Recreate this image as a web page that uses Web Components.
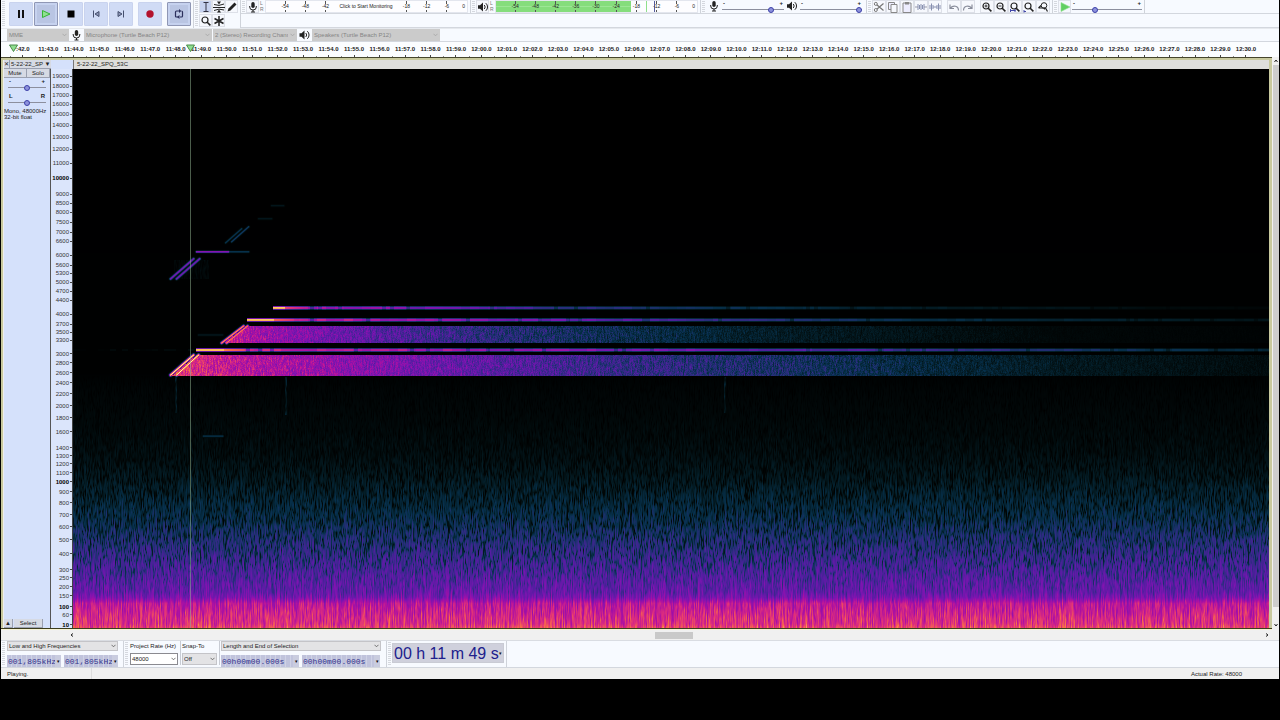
<!DOCTYPE html>
<html lang="en">
<head>
<meta charset="utf-8">
<title>5-22-22_SPQ_53C</title>
<style>
  body {
    margin: 0;
    background: #000;
    font-family: "Liberation Sans", Arial, sans-serif;
    font-size: 6px;
    color: #222;
  }
</style>
</head>
<body>

<template id="app-window-template">
  <style>
    :host {
      display: flex;
      flex-direction: column;
      height: calc(100vh - 41px);
      margin: 0 1px;
      background: #f7faff;
    }
    .top {
      display: grid;
      grid-template-columns: auto auto 1fr;
      grid-template-rows: 14px 14px;
    }
    .tall { grid-row: span 2; }
    .strip {
      display: flex;
      border-bottom: 1px solid #d3d7de;
      box-sizing: border-box;
    }
    .row { display: flex; border-bottom: 1px solid #d3d7de; border-top: 1px solid #e6e9ee; height: 12px; }
    .devices { padding-left: 6px; gap: 1px; }
    .mme { width: 62px; }
    .mic { width: 128px; }
    .channels { width: 84px; }
    .speakers { width: 128px; }
    .devices ui-icon { width: 13px; height: 12px; }
    .set { display: flex; }
    .edit { gap: 5px; --cell: 14px; }
    .transport { display: flex; gap: 1px; padding: 2px 0 0 3px; }
    .apart { margin-left: 4px; }
    .tools { display: grid; grid-template-columns: repeat(3, 13px); grid-auto-rows: 14px; }
    .volumes { display: flex; gap: 2px; padding: 0 2px; }
    .mixer { width: 62px; }
    .speed { width: 70px; margin-left: 1px; }
    track-area { flex: 1; min-height: 0; }
    .bottom { display: flex; height: 28px; border-top: 1px solid #d9dce2; border-bottom: 1px solid #d3d7de; box-sizing: border-box; }
    .stack { display: flex; flex-direction: column; gap: 4px; padding: 0 3px 0 1px; }
    .stack > div { display: flex; gap: 3px; }
    .stack ui-select { height: 10px; }
    .freq { width: 111px; }
    .length { width: 160px; }
    .field { display: flex; flex-direction: column; gap: 3px; padding: 2px 2px 0 1px; }
    .field span { line-height: 7px; white-space: nowrap; }
    .field ui-select { height: 12px; }
    .rate { width: 48px; }
    .snap { width: 35px; border-left: 1px solid #c8ccd4; border-right: 1px solid #c8ccd4; }
    .status { display: flex; height: 11px; background: #f0f0f0; line-height: 12px; }
    .status span:first-child { width: 84px; padding-left: 6px; border-right: 1px solid #ddd; }
    .status span:last-child { margin-left: auto; padding-right: 37px; }
  </style>
  <div class="top">
    <tool-bar class="tall">
      <div class="transport">
        <push-button icon="pause" label="Pause"></push-button>
        <push-button icon="play" label="Play" pressed></push-button>
        <push-button icon="stop" label="Stop"></push-button>
        <push-button icon="start" label="Skip to Start"></push-button>
        <push-button icon="end" label="Skip to End"></push-button>
        <push-button icon="record" label="Record" class="apart"></push-button>
        <push-button icon="loop" label="Loop" class="apart" pressed></push-button>
      </div>
    </tool-bar>
    <tool-bar class="tall">
      <div class="tools">
        <push-button small pressed icon="ibeam" label="Selection Tool"></push-button>
        <push-button small icon="envelope" label="Envelope Tool"></push-button>
        <push-button small icon="pencil" label="Draw Tool"></push-button>
        <push-button small icon="zoom" label="Zoom Tool"></push-button>
        <push-button small icon="multi" label="Multi-Tool"></push-button>
      </div>
    </tool-bar>
    <div class="strip">
      <tool-bar>
        <push-button small icon="mic" label="Recording Meter"></push-button>
        <level-meter ticks="-54 -48 -42"><button slot="prompt">Click to Start Monitoring</button></level-meter>
      </tool-bar>
      <tool-bar>
        <push-button small icon="speaker" label="Playback Meter"></push-button>
        <level-meter live ticks="-54 -48 -42 -36 -30 -24"></level-meter>
      </tool-bar>
      <tool-bar>
        <div class="volumes">
          <ui-icon name="mic"></ui-icon>
          <ui-slider class="mixer" value="82" label="Recording Volume"></ui-slider>
          <ui-icon name="speaker"></ui-icon>
          <ui-slider class="mixer" value="100" label="Playback Volume"></ui-slider>
        </div>
      </tool-bar>
      <tool-bar>
        <div class="set edit">
          <div class="set">
            <push-button small icon="cut" label="Cut"></push-button>
            <push-button small icon="copy" label="Copy"></push-button>
            <push-button small icon="paste" label="Paste"></push-button>
            <push-button small icon="trim" label="Trim"></push-button>
            <push-button small icon="silence" label="Silence"></push-button>
          </div>
          <div class="set">
            <push-button small icon="undo" label="Undo"></push-button>
            <push-button small icon="redo" label="Redo"></push-button>
          </div>
          <div class="set">
            <push-button small icon="zoomin" label="Zoom In"></push-button>
            <push-button small icon="zoomout" label="Zoom Out"></push-button>
            <push-button small icon="fitsel" label="Fit Selection"></push-button>
            <push-button small icon="fitproj" label="Fit Project"></push-button>
            <push-button small icon="zoomtoggle" label="Zoom Toggle"></push-button>
          </div>
        </div>
      </tool-bar>
      <tool-bar>
        <push-button small icon="go" label="Play at Speed"></push-button>
        <ui-slider class="speed" value="32" label="Playback Speed"></ui-slider>
      </tool-bar>
    </div>
    <div class="strip"></div>
  </div>
  <div class="row devices">
    <ui-select class="mme" disabled label="Audio Host" value="MME"></ui-select>
    <ui-icon name="mic"></ui-icon>
    <ui-select class="mic" disabled label="Recording Device" value="Microphone (Turtle Beach P12)"></ui-select>
    <ui-select class="channels" disabled label="Recording Channels" value="2 (Stereo) Recording Chann"></ui-select>
    <ui-icon name="speaker"></ui-icon>
    <ui-select class="speakers" disabled label="Playback Device" value="Speakers (Turtle Beach P12)"></ui-select>
  </div>
  <time-ruler></time-ruler>
  <track-area></track-area>
  <div class="bottom">
    <tool-bar>
      <div class="stack">
        <ui-select class="freq" label="Spectral Selection" value="Low and High Frequencies"></ui-select>
        <div>
          <digit-field value="001,805kHz" label="Low Frequency"></digit-field>
          <digit-field value="001,805kHz" label="High Frequency"></digit-field>
        </div>
      </div>
    </tool-bar>
    <tool-bar>
      <div class="field rate"><span>Project Rate (Hz)</span><ui-select light label="Project Rate (Hz)" value="48000"></ui-select></div>
      <div class="field snap"><span>Snap-To</span><ui-select label="Snap-To" value="Off"></ui-select></div>
      <div class="stack">
        <ui-select class="length" label="Selection Mode" value="Length and End of Selection"></ui-select>
        <div>
          <digit-field value="00h00m00.000s" label="Selection Length"></digit-field>
          <digit-field value="00h00m00.000s" label="Selection End"></digit-field>
        </div>
      </div>
    </tool-bar>
    <tool-bar>
      <big-time>00 h 11 m 49 s</big-time>
    </tool-bar>
  </div>
  <div class="status"><span>Playing.</span><span>Actual Rate: 48000</span></div>
</template>

<template id="tool-bar-template">
  <style>
    :host {
      display: flex;
      align-items: flex-start;
      border-right: 1px solid #cfd3da;
      padding-right: 2px;
    }
    i {
      align-self: stretch;
      width: 3px;
      margin: 1px;
      background: repeating-linear-gradient(#d5d8de 0 1px, transparent 1px 2px);
    }
  </style>
  <i></i><slot></slot>
</template>

<template id="push-button-template">
  <style>
    :host { display: block; }
    button {
      display: flex;
      align-items: center;
      justify-content: center;
      width: 24px;
      height: 24px;
      padding: 0;
      border: 1px solid #c9d3ee;
      border-radius: 1px;
      background: #d0dbf5;
    }
    :host([pressed]) button { background: #b9c5e3; border: 1px solid #8f97b5; box-shadow: inset 0 0 0 2px #c6d2ef; }
    :host([small]) button { width: var(--cell, 13px); height: 13px; background: #f6f8fd; border: 1px solid #dde0e8; border-radius: 0; }
    :host([small][pressed]) button { background: #c6d2ef; box-shadow: none; }
    ui-icon { flex: none; width: 12px; height: 12px; }
  </style>
  <button type="button"><ui-icon></ui-icon></button>
</template>

<template id="ui-select-template">
  <style>
    :host { display: grid; }
    select, svg { grid-area: 1 / 1; }
    select {
      appearance: none;
      box-sizing: border-box;
      width: 100%;
      height: 100%;
      min-width: 0;
      padding: 0 8px 0 1px;
      border: 1px solid #c4c4c8;
      border-radius: 0;
      background: #e3e3e5;
      color: #1c1c1c;
      font: inherit;
      opacity: 1;
    }
    :host([light]) select { background: #fff; border-color: #8a8a90; }
    :host([disabled]) select { background: #cbcbcb; border-color: #cbcbcb; color: #858585; }
    svg { justify-self: end; align-self: center; width: 5px; height: 4px; margin-right: 2px; fill: none; stroke: #555; pointer-events: none; }
    :host([disabled]) svg { stroke: #a5a5a5; }
  </style>
  <select><option></option></select>
  <svg viewBox="0 0 5 4"><path d="M.5 .8 2.5 2.8 4.5 .8" stroke-width=".8"/></svg>
</template>

<template id="ui-slider-template">
  <style>
    :host { display: grid; grid-template-columns: 1fr 1fr; height: 13px; }
    span { line-height: 7px; font-size: 6px; font-weight: bold; grid-row: 1; height: 6px; padding: 0 1px; }
    span + span { text-align: right; }
    input {
      appearance: none;
      grid-column: 1 / 3;
      width: 100%;
      height: 6px;
      margin: 0;
      background: linear-gradient(#8c8f9e, #8c8f9e) center / 100% 1px no-repeat;
    }
    input::-webkit-slider-thumb {
      appearance: none;
      box-sizing: border-box;
      width: 6px;
      height: 6px;
      border: 1px solid #3c40a8;
      border-radius: 50%;
      background: #8d92dc;
    }
  </style>
  <span></span><span></span>
  <input type="range">
</template>

<template id="level-meter-template">
  <style>
    :host { display: flex; width: 209px; height: 13px; font-size: 5px; }
    .lr { width: 5px; padding-left: 1px; font-size: 5px; line-height: 6px; color: #777; }
    .scale {
      flex: 1;
      display: flex;
      align-items: center;
      padding-left: 9px;
      border: 1px solid #e3e6ee;
      box-sizing: border-box;
      background: #fdfdff;
    }
    :host([live]) .scale {
      background:
        linear-gradient(#555c9c, #555c9c) 79% 0 / 1px 100% no-repeat,
        linear-gradient(#8fe08c, #8fe08c) 75% 0 / 1px 100% no-repeat,
        linear-gradient(#9ce695, #9ce695) 0 50% / 67% 1px no-repeat,
        linear-gradient(90deg, #85dd7c 0 67%, #fdfdff 67%);
    }
    .scale > span {
      flex: 1 0 0;
      text-align: center;
      line-height: 11px;
      background: linear-gradient(#555, #555) center top / 1px 3px no-repeat,
        linear-gradient(#555, #555) center bottom / 1px 2px no-repeat;
    }
    .prompt { flex: 3 0 0; min-width: 0; display: flex; justify-content: center; }
    ::slotted(button) { padding: 0; border: 0; background: none; color: #222; font: inherit; white-space: nowrap; line-height: 11px; }
    .scale > .zero { text-align: right; background: none; flex: 0 0 10px; padding-right: 2px; box-sizing: border-box; }
  </style>
  <div class="lr">L<br>R</div>
  <div class="scale"></div>
</template>

<template id="digit-field-template">
  <style>
    :host { display: flex; height: 12px; background: #c9ccdf; color: #34348c; }
    input {
      width: 48px;
      box-sizing: border-box;
      padding: 0 0 0 1px;
      border: 0;
      background: repeating-linear-gradient(90deg, #c0c3dc 0 4px, #cfd2e6 4px 5px);
      color: inherit;
      font: 8px "Liberation Mono", monospace;
    }
    :host([wide]) input { width: 72px; }
    button { width: 6px; padding: 0; border: 0; background: #c9ccdf; color: #111; font-size: 5px; line-height: 11px; }
  </style>
  <input type="text"><button type="button" aria-label="Format">▾</button>
</template>

<template id="big-time-template">
  <style>
    :host { display: flex; margin: 2px 0 0; border: 1px solid #c9cbd4; background: #cfd0dc; color: #20208c; height: 18px; }
    output {
      font-size: 16px;
      line-height: 20px;
      padding-left: 1px;
      white-space: nowrap;
    }
    button { width: 4px; padding: 0; border: 0; background: none; color: #111; font-size: 5px; }
  </style>
  <output><slot></slot></output><button type="button" aria-label="Format">▾</button>
</template>

<template id="time-ruler-template">
  <style>
    :host { display: flex; position: relative; height: 15px; padding: 0 20px 0 9px; background: #fbfdff; overflow: hidden; }
    span {
      flex: 1 0 0;
      min-width: 0;
      display: flex;
      justify-content: center;
      font-weight: bold;
      line-height: 15px;
      background: linear-gradient(#444, #444) center bottom / 1px 2px no-repeat,
        linear-gradient(#888, #888) left bottom / 1px 1px no-repeat;
    }
    span:first-child { justify-content: flex-end; }
    svg { position: absolute; top: 2px; width: 9px; height: 8px; }
    .pin { left: 8px; }
    .head { left: 185px; }
  </style>
</template>

<template id="track-area-template">
  <style>
    :host {
      display: grid;
      grid-template-columns: 1fr 7px;
      grid-template-rows: 1fr 11px;
      background: #f0f0f0;
    }
    .track {
      display: grid;
      grid-template-columns: 48px 22px 1fr;
      grid-template-rows: 9px 1fr;
      min-height: 0;
      border-top: 1px solid #45452c;
      border-bottom: 1px solid #3c3c1c;
      padding: 2px 3px 0 2px;
      background: #c8c99e;
    }
    .panel {
      grid-row: 1 / 3;
      display: flex;
      flex-direction: column;
      background: #d5e1fb;
      border-right: 1px solid #555;
      border-left: 1px solid #eee;
      box-sizing: border-box;
      min-height: 0;
    }
    .name, .pair, .foot { display: flex; }
    button { padding: 0; border: 0; border-right: 1px solid #9aa0b0; border-bottom: 1px solid #9aa0b0; background: #d6dae4; color: #222; font: inherit; line-height: 8px; height: 9px; }
    .name button:first-child { width: 9px; }
    .name button:last-child { flex: 1; white-space: nowrap; text-align: left; padding-left: 1px; }
    .pair button { flex: 1; }
    .panel ui-slider { margin: 0 4px 2px; height: 13px; }
    .panel p { margin: 0; line-height: 6px; }
    .foot { margin-top: auto; gap: 1px; }
    .foot button:first-child { width: 9px; }
    .foot button:last-child { width: 29px; }
    .corner { background: #d5e1fb; }
    .clip { background: #dededc; line-height: 9px; padding-left: 3px; overflow: hidden; border-left: 1px solid #777; }
    freq-ruler { min-height: 0; }
    spectro-view { min-height: 0; min-width: 0; }
    .vbar, .hbar { display: flex; justify-content: space-between; align-items: center; }
    .vbar { flex-direction: column; padding: 2px 0; }
    .vbar i { flex: 1; width: 6px; margin: 2px 0 16px; background: #cdcdcd; }
    .hbar { padding: 0 3px 0 69px; border-top: 1px solid #f7f4d4; }
    .hbar i { width: 38px; height: 7px; margin-left: 8px; background: #c9c9c9; }
    svg { width: 4px; height: 4px; fill: none; stroke: #222; }
  </style>
  <div class="track">
    <div class="panel">
      <div class="name"><button type="button" aria-label="Close">✕</button><button type="button">5-22-22_SP ▼</button></div>
      <div class="pair"><button type="button">Mute</button><button type="button">Solo</button></div>
      <ui-slider value="50" label="Gain"></ui-slider>
      <ui-slider value="50" low="L" high="R" label="Pan"></ui-slider>
      <p>Mono, 48000Hz<br>32-bit float</p>
      <div class="foot"><button type="button" aria-label="Collapse">▲</button><button type="button">Select</button></div>
    </div>
    <div class="corner"></div>
    <div class="clip">5-22-22_SPQ_53C</div>
    <freq-ruler></freq-ruler>
    <spectro-view></spectro-view>
  </div>
  <div class="vbar">
    <svg viewBox="0 0 4 4"><path d="M.5 3 2 1 3.5 3"/></svg><i></i>
    <svg viewBox="0 0 4 4"><path d="M.5 1 2 3 3.5 1"/></svg>
  </div>
  <div class="hbar">
    <svg viewBox="0 0 4 4"><path d="M3 .5 1 2 3 3.5"/></svg><i></i>
    <svg viewBox="0 0 4 4"><path d="M1 .5 3 2 1 3.5"/></svg>
  </div>
</template>

<template id="freq-ruler-template">
  <style>
    :host { display: flex; flex-direction: column; background: #dbe5fb; border-right: 1px solid #444; box-sizing: border-box; }
    div { flex-basis: 0; min-height: 0; display: flex; align-items: flex-end; justify-content: flex-end; }
    span { display: flex; align-items: center; height: 8px; margin-bottom: -4px; line-height: 8px; color: #333; }
    span::after { content: ""; width: 2px; height: 1px; margin-left: 1px; background: #444; }
    .major { font-weight: bold; color: #000; }
  </style>
</template>

<template id="spectro-view-template">
  <style>
    :host { display: block; background: #000; }
    canvas { display: block; width: 100%; height: 100%; }
  </style>
  <canvas role="img" aria-label="Spectrogram"></canvas>
</template>

<app-window></app-window>

<script>
const stamp = (host, id) => {
  const root = host.attachShadow({mode: 'open'});
  root.appendChild(document.getElementById(id + '-template').content.cloneNode(true));
  return root;
};

const glass = '<circle cx="5" cy="5" r="3" fill="none" stroke="#222" stroke-width="1.2"/><path d="M7.2 7.2 10.4 10.4" stroke="#222" stroke-width="1.6"/>';
const icons = {
  pause: '<path d="M3 2h2v8H3zM7 2h2v8H7z" fill="#111"/>',
  play: '<path d="M2.5 2.5 10 6 2.5 9.5z" fill="#8fe08f" stroke="#35b535"/>',
  stop: '<path d="M2.5 2.5h7v7h-7z" fill="#000"/>',
  start: '<path d="M3.5 2.5v7M9 3.5 5 6 9 8.5z" fill="#8a94b4" stroke="#46506e"/>',
  end: '<path d="M8.5 2.5v7M3 3.5 7 6 3 8.5z" fill="#8a94b4" stroke="#46506e"/>',
  record: '<circle cx="6" cy="6" r="3.7" fill="#b3122c"/>',
  loop: '<path d="M5 9H3.500Q2.500 9 2.500 8V4Q2.500 3 3.500 3H7M7 9H8.500Q9.500 9 9.500 8V4Q9.500 3 8.500 3" fill="none" stroke="#2b2f5c" stroke-width="1.200"/><path d="M6 1 8.300 3 6 5zM6.500 7 4 9l2.500 2z" fill="#2b2f5c"/>',
  ibeam: '<path d="M3.5 1.5h5M3.5 10.5h5M6 1.5v9" stroke="#334" fill="none"/>',
  envelope: '<path d="M0 6.500h12M1 9.500q5-2.500 10-.5M1 3.500q5 2 10-.5" stroke="#222" fill="none"/><path d="M4 .5h4L6 3.5zM4 11.5h4L6 8.5z" fill="#222"/>',
  pencil: '<path d="M1.5 10.5 2.5 7.5 8.5 1.5 10.5 3.5 4.5 9.5z" fill="#222"/>',
  zoom: glass,
  multi: '<path d="M6 1v10M1.5 3.5l9 5M1.5 8.5l9-5" stroke="#222" stroke-width="1.5"/>',
  mic: '<rect x="4.3" y="1" width="3.4" height="6" rx="1.7" fill="#222"/><path d="M2.7 5v1a3.3 3 0 0 0 6.600 0V5M6 9v2M4 11h4" fill="none" stroke="#222"/>',
  speaker: '<path d="M1 4.200h2L6 1.500v9L3 7.800H1z" fill="#222"/><path d="M7.300 4a3 3 0 0 1 0 4M8.800 2.200a5 5 0 0 1 0 7.600" stroke="#222" fill="none"/>',
  cut: '<path d="M3.500 3.500 10.500 9.500M3.500 8.500 10.500 2.500" stroke="#777" stroke-width="1.200"/><circle cx="2.800" cy="2.900" r="1.500" fill="#f6f8fd" stroke="#777"/><circle cx="2.800" cy="9" r="1.500" fill="#f6f8fd" stroke="#777"/>',
  copy: '<path d="M1.500 1.500h6v7h-6z" fill="#eef" stroke="#888"/><path d="M4 3.500h6v8H4z" fill="#f6f8fd" stroke="#888"/>',
  paste: '<path d="M2 2h8v9.500H2z" fill="#eef" stroke="#888"/><path d="M4 1h4v2.500H4z" fill="#888"/>',
  trim: '<path d="M0 6h3M9 6h3" stroke="#99a"/><path d="M3 3v6M4.500 4v4M6 3v6M7.500 4v4M9 3v6" stroke="#8890b0"/>',
  silence: '<path d="M1 4v4M2.500 2.500v7M4 4v4M8 4v4M9.500 2.500v7M11 4v4M4 6h4" stroke="#8890b0"/>',
  undo: '<path d="M10.500 9.500C10.500 4.500 5 4 2.500 7M2 3.500v4h4" fill="none" stroke="#8a8e9c" stroke-width="1.200"/>',
  redo: '<path d="M1.500 9.500C1.500 4.500 7 4 9.500 7M10 3.500v4H6" fill="none" stroke="#8a8e9c" stroke-width="1.200"/>',
  zoomin: glass + '<path d="M3.500 5h3M5 3.500v3" stroke="#222" stroke-width=".9"/>',
  zoomout: glass + '<path d="M3.500 5h3" stroke="#222" stroke-width=".9"/>',
  fitsel: glass + '<path d="M1 9.500h5.500M1.500 8v3M6 8v3" stroke="#4348a8" fill="none"/>',
  fitproj: glass + '<path d="M1 9v2.500M1 10.500h2" stroke="#4348a8" fill="none"/>',
  zoomtoggle: '<circle cx="7" cy="4.500" r="2.800" fill="none" stroke="#222"/><path d="M8.500 7 10.500 10.500M1.500 7h6v1.500M1.500 7 4 4.500" stroke="#222" fill="none" stroke-width="1.200"/>',
  go: '<path d="M2 1.500 11 6 2 10.500z" fill="#62cf62" stroke="#8fdf8f" stroke-width=".6"/>',
};

class UiIcon extends HTMLElement {
  static observedAttributes = ['name'];
  constructor() {
    super();
    this.attachShadow({mode: 'open'});
  }
  attributeChangedCallback(attr, old, name) {
    this.shadowRoot.innerHTML = `<style>:host { display: block; width: 12px; height: 12px; } svg { display: block; width: 100%; height: 100%; }</style>
      <svg viewBox="0 0 12 12" aria-hidden="true">${icons[name]}</svg>`;
  }
}

class ToolBar extends HTMLElement {
  constructor() {
    super();
    stamp(this, 'tool-bar');
  }
}

class PushButton extends HTMLElement {
  connectedCallback() {
    if (this.shadowRoot) return;
    const root = stamp(this, 'push-button');
    root.querySelector('ui-icon').setAttribute('name', this.getAttribute('icon'));
    root.querySelector('button').setAttribute('aria-label', this.getAttribute('label'));
  }
}

class UiSelect extends HTMLElement {
  connectedCallback() {
    if (this.shadowRoot) return;
    const root = stamp(this, 'ui-select');
    const select = root.querySelector('select');
    select.setAttribute('aria-label', this.getAttribute('label'));
    select.disabled = this.hasAttribute('disabled');
    root.querySelector('option').textContent = this.getAttribute('value');
  }
}

class UiSlider extends HTMLElement {
  connectedCallback() {
    if (this.shadowRoot) return;
    const root = stamp(this, 'ui-slider');
    const [low, high] = root.querySelectorAll('span');
    low.textContent = this.getAttribute('low') || '-';
    high.textContent = this.getAttribute('high') || '+';
    const input = root.querySelector('input');
    input.value = this.getAttribute('value');
    input.setAttribute('aria-label', this.getAttribute('label'));
  }
}

class LevelMeter extends HTMLElement {
  connectedCallback() {
    if (this.shadowRoot) return;
    const scale = stamp(this, 'level-meter').querySelector('.scale');
    let html = this.getAttribute('ticks').split(' ').map(t => `<span>${t}</span>`).join('');
    if (!this.hasAttribute('live')) html += '<div class="prompt"><slot name="prompt"></slot></div>';
    html += '<span>-18</span><span>-12</span><span>-6</span><span class="zero">0</span>';
    scale.innerHTML = html;
  }
}

class DigitField extends HTMLElement {
  connectedCallback() {
    if (this.shadowRoot) return;
    const input = stamp(this, 'digit-field').querySelector('input');
    input.value = this.getAttribute('value');
    input.setAttribute('aria-label', this.getAttribute('label'));
    this.toggleAttribute('wide', input.value.length > 10);
  }
}

class BigTime extends HTMLElement {
  constructor() {
    super();
    stamp(this, 'big-time');
  }
}

class TimeRuler extends HTMLElement {
  constructor() {
    super();
    const root = stamp(this, 'time-ruler');
    let html = '<span>:42.0</span>';
    for (let s = 11 * 60 + 43; s <= 12 * 60 + 30; s++) {
      html += `<span>${Math.floor(s / 60)}:${String(s % 60).padStart(2, '0')}.0</span>`;
    }
    const arrow = '<path d="M.5 1h8L4.500 7.500z" fill="#8fdf8f" stroke="#4a8a4a"/>';
    html += `<svg class="pin" viewBox="0 0 9 8">${arrow}</svg><svg class="head" viewBox="0 0 9 8">${arrow}</svg>`;
    root.innerHTML += html;
  }
}

// label and its distance from the top of the track
const marks = [[19000,7],[18000,17],[17000,26],[16000,35],[15000,45],[14000,56],[13000,68],[12000,80],[11000,94],[10000,109],
  [9000,125],[8500,134],[8000,143],[7500,153],[7000,163],[6600,172],[6000,186],[5600,196],[5300,204],[5000,213],[4700,222],[4400,231],
  [4000,245],[3700,255],[3500,263],[3300,271],[3000,284],[2800,293],[2600,303],[2400,313],[2200,324],[2000,336],[1800,348],[1600,362],
  [1400,378],[1300,386],[1200,394],[1100,403],[1000,412],[900,422],[800,433],[700,445],[600,457],[500,470],[400,484],[300,500],
  [250,508],[200,517],[150,526],[100,537],[60,545],[10,555]];

class FreqRuler extends HTMLElement {
  constructor() {
    super();
    const root = stamp(this, 'freq-ruler');
    let prev = 0;
    for (const [hz, y] of marks) {
      const row = document.createElement('div');
      row.style.flexGrow = y - prev;
      row.innerHTML = `<span class="${[10000, 1000, 100, 10].includes(hz) ? 'major' : ''}">${hz}</span>`;
      root.appendChild(row);
      prev = y;
    }
    const rest = document.createElement('div');
    rest.style.flexGrow = 558 - prev;
    root.appendChild(rest);
  }
}

const palette = [[0,0,0,0],[.08,1,9,10],[.16,3,26,34],[.26,6,48,76],[.35,38,46,122],[.45,82,30,160],[.55,124,20,176],
  [.65,172,16,162],[.75,222,46,124],[.85,250,110,70],[.93,254,196,90],[1,255,252,205]];
// background energy by height
const floorLevel = [[0,.002],[300,.006],[318,.035],[350,.06],[385,.09],[410,.135],[430,.19],[450,.25],[470,.33],[490,.395],
  [510,.46],[522,.49],[527,.54],[533,.67],[548,.73],[553,.74],[558,.79]];
const bandLow = [[97,.8],[125,.74],[170,.68],[250,.61],[340,.54],[450,.45],[560,.38],[700,.32],[850,.23],[1000,.15],[1195,.09]];
const bandHigh = [[147,.73],[180,.64],[260,.52],[360,.41],[450,.33],[560,.26],[700,.17],[850,.12],[1000,.06],[1195,.03]];

const lerp = (table, v) => {
  if (v <= table[0][0]) return table[0][1];
  for (let i = 1; i < table.length; i++) {
    if (v <= table[i][0]) {
      const [a, x] = table[i - 1], [b, y] = table[i];
      return x + (y - x) * (v - a) / (b - a);
    }
  }
  return table[table.length - 1][1];
};
const hash = (x, y) => {
  let n = Math.imul(x, 374761393) + Math.imul(y, 668265263);
  n = Math.imul(n ^ n >>> 13, 1274126177);
  return ((n ^ n >>> 16) >>> 0) / 4294967296;
};
// noise stretched along y, each column shifted by its own phase
const streak = (x, y, len, seed) => {
  const v = y / len + hash(x, seed) * 9;
  const i = Math.floor(v), f = v - i;
  return hash(x + seed * 7, i) * (1 - f) + hash(x + seed * 7, i + 1) * f;
};
// x0, y0, x1, y1, level, half width
const strokes = [[97,305,120,285,.98,1.1],[103,305,125,285,.98,1.1],[148,273,170,256,.9,1],[153,273,174,256,.88,1],
  [97,209,120,189,.54,1],[103,209,126,189,.53,1],[152,173,168,159,.26,.8],[158,172,175,157,.3,.8],
  [185,149,198,149,.14,.8],[198,136,210,136,.14,.8],[123,182,155,182,.62,.8],[155,182,175,182,.28,.8],
  [130,366,149,366,.24,1],[125,265,149,265,.14,.9]];
// y, left edge, end of the bright start, level along x
const tones = [[280,122,150,[[150,.92],[180,.8],[300,.72],[500,.64],[620,.59],[700,.5],[900,.4],[1050,.3],[1195,.22]]],
  [250,173,200,[[200,.88],[230,.75],[400,.64],[520,.52],[650,.41],[850,.27],[1195,.14]]],
  [238,199,211,[[211,.84],[235,.7],[340,.6],[430,.48],[600,.32],[800,.2],[1195,.06]]]];

class SpectroView extends HTMLElement {
  constructor() {
    super();
    stamp(this, 'spectro-view');
  }
  connectedCallback() {
    this.draw();
    addEventListener('resize', () => this.draw());
  }
  level(u, v, x) {
    const n = streak(x, v, 4, 1);
    const slow = streak(x, v, 13, 3);
    let t = lerp(floorLevel, v);
    if (v > 306) {
      // quieter columns dip towards black; the lowest rows stay solid
      const deep = Math.max(0, Math.min(1, (v - 490) / 40));
      const dip = Math.pow(Math.max(0, .5 - n), 1.2) * .7 * Math.min(1, t * 3.5);
      t += (1 - deep) * ((n - .45) * Math.min(.11, t * .7) - dip * .55 + (slow - .5) * Math.min(.09, t * .5));
      t += deep * ((slow - .5) * .17 + (n - .5) * .09);
    }
    const low = u >= 97 + (307 - v) * 1.18 && v >= 285 && v <= 306;
    const high = u >= 149 + (274 - v) * 1.3 && v >= 256 && v <= 273;
    if (low || high) {
      t = lerp(low ? bandLow : bandHigh, u);
      const fine = hash(x, Math.floor(v) + 5000);
      t += (streak(x, v, 3, 5) - .55) * Math.min(.15, t * .5) + (fine - .5) * Math.min(.1, t * .4);
    }
    for (const [y, left, bright, along] of tones) {
      const d = Math.abs(v - y);
      if (d > 3 || u < left) continue;
      let a = u < bright ? .98 : lerp(along, u);
      if (u > bright + 20) a *= .88 + .18 * hash(Math.floor(u / 9), y) - (hash(Math.floor(u / 4), y + 9) > .92 ? .25 : 0);
      t = Math.max(t, a * Math.max(0, 1 - d * d * .22));
    }
    // the low tone is already faintly there before the strike
    if (u < 122 && Math.abs(v - 280) < 1) t = Math.max(t, .09 * hash(Math.floor(u / 6), 4));
    for (const [x0, y0, x1, y1, a, w] of strokes) {
      const dx = x1 - x0, dy = y1 - y0;
      const k = Math.max(0, Math.min(1, ((u - x0) * dx + (v - y0) * dy) / (dx * dx + dy * dy)));
      const d = Math.hypot(u - x0 - k * dx, v - y0 - k * dy) / w;
      if (d < 3) t = Math.max(t, a * Math.exp(-d * d * .5));
    }
    // faint clicks under the lower band
    for (const [cx, len] of [[102, 36], [212, 38], [651, 36]]) {
      if (Math.abs(u - cx) < 1 && v > 307 && v < 307 + len) t = Math.max(t, .16 * n + .05);
    }
    if (u > 100 && u < 135 && v > 190 && v < 209) t = Math.max(t, .1 * n);
    return t;
  }
  draw() {
    const canvas = this.shadowRoot.querySelector('canvas');
    const w = canvas.width = this.clientWidth, h = canvas.height = this.clientHeight;
    if (!w || !h) return;
    const ctx = canvas.getContext('2d');
    const img = ctx.createImageData(w, h);
    const ramp = [1, 2, 3].map(c => palette.map(p => [p[0], p[c]]));
    for (let y = 0; y < h; y++) {
      for (let x = 0; x < w; x++) {
        const t = this.level(x * 1195 / w, y * 558 / h, x);
        const o = (y * w + x) * 4;
        for (let c = 0; c < 3; c++) img.data[o + c] = lerp(ramp[c], t);
        img.data[o + 3] = 255;
      }
    }
    ctx.putImageData(img, 0, 0);
    ctx.fillStyle = 'rgba(150, 185, 150, .5)';
    ctx.fillRect(Math.round(w * 117 / 1195), 0, 1, h);
  }
}

class TrackArea extends HTMLElement {
  constructor() {
    super();
    stamp(this, 'track-area');
  }
}

class AppWindow extends HTMLElement {
  constructor() {
    super();
    stamp(this, 'app-window');
  }
}

customElements.define('ui-icon', UiIcon);
customElements.define('tool-bar', ToolBar);
customElements.define('push-button', PushButton);
customElements.define('ui-select', UiSelect);
customElements.define('ui-slider', UiSlider);
customElements.define('level-meter', LevelMeter);
customElements.define('digit-field', DigitField);
customElements.define('big-time', BigTime);
customElements.define('time-ruler', TimeRuler);
customElements.define('freq-ruler', FreqRuler);
customElements.define('track-area', TrackArea);
customElements.define('app-window', AppWindow);
customElements.define('spectro-view', SpectroView);
</script>
</body>
</html>
